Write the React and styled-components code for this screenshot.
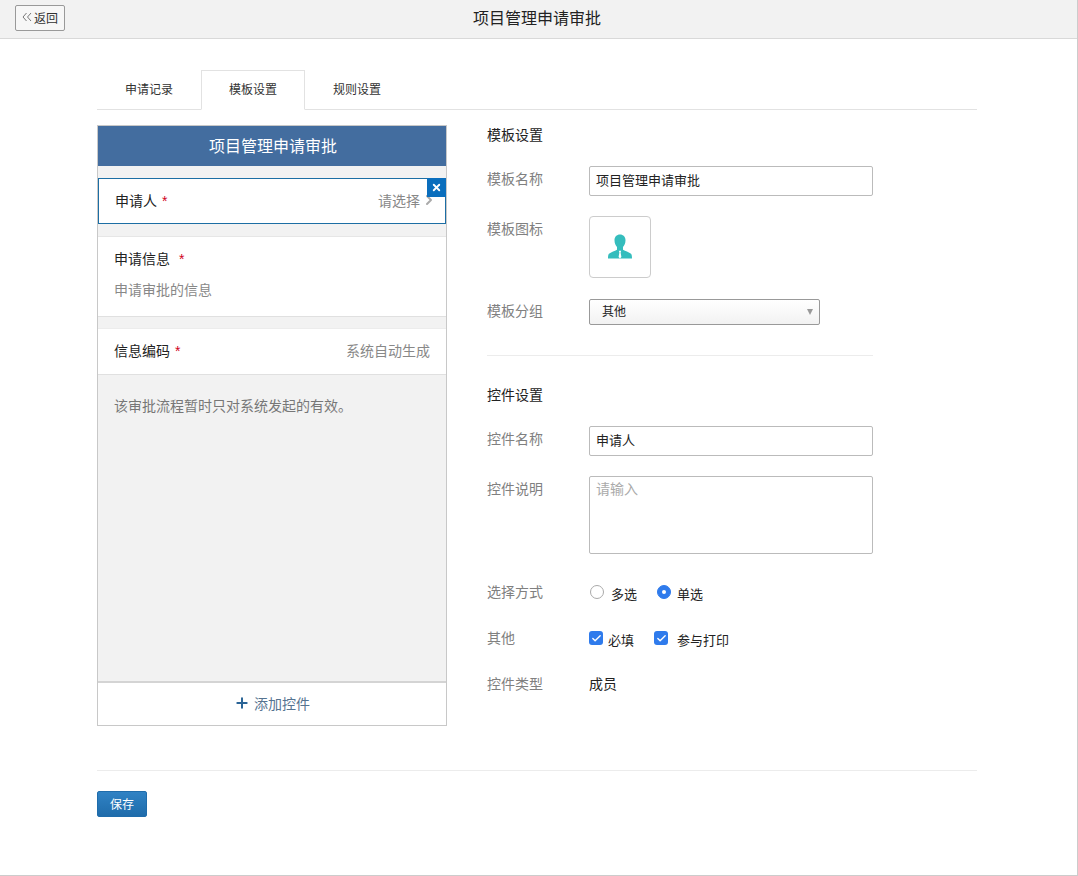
import React from "react";
import styled, { createGlobalStyle } from "styled-components";
import { ChevronRight, Plus, X, Check } from "lucide-react";

const GlobalStyle = createGlobalStyle`
  html, body {
    margin: 0;
    padding: 0;
    background: #fff;
  }
  body {
    font-family: "Liberation Sans", "Noto Sans CJK SC", sans-serif;
    color: #333;
  }
  * {
    box-sizing: border-box;
  }
`;

const Page = styled.div`
  width: 1078px;
  height: 876px;
  border-right: 1px solid #ccc;
  border-bottom: 1px solid #ccc;
  overflow: hidden;
`;

const TopBar = styled.header`
  height: 39px;
  background: #f2f2f2;
  border-bottom: 1px solid #d9d9d9;
  position: relative;
  padding: 5px 15px;
`;

const BackButton = styled.button`
  width: 50px;
  height: 26px;
  display: flex;
  align-items: center;
  gap: 2px;
  padding: 0 0 2px 6px;
  background: #f7f7f7;
  border: 1px solid #999;
  border-radius: 2px;
  font: inherit;
  font-size: 12px;
  color: #333;
`;

const Title = styled.h1`
  position: absolute;
  inset: 0 3px 0 0;
  margin: 0;
  text-align: center;
  font-size: 16px;
  font-weight: 400;
  line-height: 37px;
  color: #222;
  pointer-events: none;
`;

const Main = styled.main`
  width: 880px;
  margin-left: 97px;
  padding-top: 31px;
`;

const Tabs = styled.nav`
  display: flex;
  height: 40px;
  border-bottom: 1px solid #e2e2e2;
`;

const Tab = styled.div`
  width: 104px;
  height: ${({ $active }) => ($active ? "40px" : "39px")};
  text-align: center;
  font-size: 12px;
  line-height: 39px;
  color: #333;
  background: ${({ $active }) => ($active ? "#fff" : "transparent")};
  border: 1px solid ${({ $active }) => ($active ? "#e2e2e2" : "transparent")};
  border-bottom: ${({ $active }) => ($active ? "1px solid #fff" : "none")};
`;

const Columns = styled.div`
  display: flex;
  gap: 40px;
  margin-top: 15px;
`;

const Phone = styled.section`
  width: 350px;
  height: 601px;
  display: flex;
  flex-direction: column;
  background: #f2f2f2;
  border: 1px solid #c8c8c8;
`;

const PhoneHeader = styled.div`
  height: 40px;
  padding-left: 2px;
  background: #436d9f;
  color: #fff;
  font-size: 16px;
  line-height: 42px;
  text-align: center;
  flex: none;
`;

const SelectedRow = styled.div`
  position: relative;
  height: 46px;
  margin-top: 12px;
  padding: 0 8px 2px 16px;
  display: flex;
  align-items: center;
  justify-content: space-between;
  background: #fff;
  border: 1px solid #1c6ea4;
  font-size: 14px;
  color: #222;
  flex: none;
`;

const RemoveBadge = styled.span`
  position: absolute;
  top: -1px;
  right: -1px;
  width: 19px;
  height: 19px;
  display: flex;
  align-items: center;
  justify-content: center;
  background: #0a6ebd;
  color: #fff;
`;

const Required = styled.span`
  color: #d0021b;
  font-size: 14px;
  margin-left: ${({ $gap }) => $gap || 5}px;
`;

const Hint = styled.span`
  display: flex;
  align-items: center;
  gap: 1px;
  color: #888;
  font-size: 14px;
`;

const InfoBlock = styled.div`
  height: 81px;
  margin-top: 12px;
  padding: 11px 16px 0;
  background: #fff;
  border-top: 1px solid #e6e6e6;
  border-bottom: 1px solid #e0e0e0;
  font-size: 14px;
  color: #222;
  flex: none;
`;

const InfoHint = styled.div`
  margin-top: 12px;
  font-size: 14px;
  line-height: 20px;
  color: #888;
`;

const CodeRow = styled.div`
  height: 47px;
  margin-top: 11px;
  padding: 0 16px 4px 16px;
  display: flex;
  align-items: center;
  justify-content: space-between;
  background: #fff;
  border-top: 1px solid #ececec;
  border-bottom: 1px solid #e0e0e0;
  font-size: 14px;
  color: #222;
  flex: none;
`;

const Notice = styled.div`
  flex: 1;
  padding: 21px 16px 0;
  font-size: 14px;
  line-height: 20px;
  color: #777;
`;

const AddControl = styled.div`
  height: 44px;
  flex: none;
  display: flex;
  align-items: center;
  justify-content: center;
  gap: 4px;
  padding-bottom: 2px;
  background: #fff;
  border-top: 2px solid #d4d4d4;
  font-size: 14px;
  color: #557390;
  svg {
    color: #2a6496;
  }
`;

const Form = styled.section`
  width: 386px;
`;

const SectionTitle = styled.h2`
  margin: 0;
  font-size: 14px;
  font-weight: 400;
  line-height: 20px;
  color: #222;
`;

const Row = styled.div`
  display: flex;
  align-items: flex-start;
  margin-top: ${({ $top }) => $top}px;
`;

const Label = styled.label`
  width: 102px;
  flex: none;
  font-size: 14px;
  line-height: 20px;
  padding-top: ${({ $pad }) => $pad ?? 3}px;
  color: #808080;
`;

const TextInput = styled.div`
  width: 284px;
  height: 30px;
  padding: 0 6px;
  font-size: 13px;
  line-height: 28px;
  color: #222;
  background: #fff;
  border: 1px solid #bbb;
  border-radius: 2px;
`;

const TextArea = styled.div`
  width: 284px;
  height: 78px;
  padding: 3px 6px;
  font-size: 14px;
  line-height: 18px;
  color: #aaa;
  background: #fff;
  border: 1px solid #bbb;
  border-radius: 2px;
`;

const IconBox = styled.div`
  width: 62px;
  height: 62px;
  display: flex;
  align-items: center;
  justify-content: center;
  border: 1px solid #ccc;
  border-radius: 4px;
`;

const SelectBox = styled.div`
  position: relative;
  width: 231px;
  height: 26px;
  margin-top: 0;
  padding-left: 12px;
  font-size: 12px;
  line-height: 24px;
  color: #222;
  background: linear-gradient(#fff, #f2f2f2);
  border: 1px solid #999;
  border-radius: 2px;
  &::after {
    content: "";
    position: absolute;
    right: 6px;
    top: 9px;
    border-left: 3px solid transparent;
    border-right: 3px solid transparent;
    border-top: 6px solid #999;
  }
`;

const Divider = styled.hr`
  margin: 30px 0 29px;
  border: 0;
  border-top: 1px solid #ececec;
`;

const OptionGroup = styled.div`
  display: flex;
  align-items: center;
  height: 20px;
  font-size: 13px;
  color: #222;
`;

const OptionText = styled.span`
  padding-top: 2px;
`;

const Radio = styled.span`
  width: 14px;
  height: 14px;
  flex: none;
  border-radius: 50%;
  display: flex;
  align-items: center;
  justify-content: center;
  margin: ${({ $first }) => ($first ? "0 7px 0 1px" : "0 6px 0 20px")};
  background: ${({ $on }) => ($on ? "#2f7bec" : "#fff")};
  border: 1px solid ${({ $on }) => ($on ? "#2f7bec" : "#aaa")};
  &::after {
    content: "";
    display: ${({ $on }) => ($on ? "block" : "none")};
    width: 4px;
    height: 4px;
    border-radius: 50%;
    background: #fff;
  }
`;

const CheckBox = styled.span`
  width: 14px;
  height: 14px;
  flex: none;
  display: flex;
  align-items: center;
  justify-content: center;
  border-radius: 3px;
  background: #2f7bec;
  color: #fff;
  margin: ${({ $first }) => ($first ? "0 5px 0 0" : "0 9px 0 20px")};
`;

const PlainValue = styled.span`
  font-size: 14px;
  line-height: 20px;
  color: #222;
`;

const Footer = styled.footer`
  margin-top: 44px;
  padding-top: 20px;
  border-top: 1px solid #ececec;
`;

const SaveButton = styled.button`
  display: block;
  width: 50px;
  height: 26px;
  padding: 0 0 2px;
  font: inherit;
  font-size: 12px;
  color: #fff;
  background: linear-gradient(#3082c4, #1f6cab);
  border: 1px solid #1f6cab;
  border-radius: 2px;
`;

const PersonIcon = () => (
  <svg width="26" height="26" viewBox="0 0 26 26">
    <path
      fill="#35bdbd"
      d="M13 .5c3.300 0 5.500 2.300 5.500 5.800 0 3-1.200 5.400-2.500 6.800v2.700c2.500 1.400 5.500 2.300 7.600 3.700.9.600 1.400 1.500 1.400 5H1c0-3.500.5-4.400 1.400-5 2.100-1.400 5.100-2.300 7.600-3.700v-2.700C8.700 11.700 7.500 9.300 7.500 6.300 7.500 2.800 9.700.5 13 .5z"
    />
    <path fill="#fff" d="M11.800 16.800h2.400l-.6 1.700.8 4.500-1.400 1.500-1.400-1.500.8-4.500z" />
  </svg>
);

const BackIcon = () => (
  <svg width="10" height="10" viewBox="0 0 10 10" fill="none" stroke="#777" strokeWidth="1">
    <path d="M4.500 1 1 5l3.500 4M9 1 5.500 5 9 9" />
  </svg>
);

const App = () => {
  return (
    <Page>
      <GlobalStyle />
      <TopBar>
        <BackButton>
          <BackIcon />
          返回
        </BackButton>
        <Title>项目管理申请审批</Title>
      </TopBar>
      <Main>
        <Tabs>
          <Tab>申请记录</Tab>
          <Tab $active>模板设置</Tab>
          <Tab>规则设置</Tab>
        </Tabs>
        <Columns>
          <Phone>
            <PhoneHeader>项目管理申请审批</PhoneHeader>
            <SelectedRow>
              <span>
                申请人<Required>*</Required>
              </span>
              <Hint>
                请选择
                <ChevronRight size={16} color="#aaa" strokeWidth={3} />
              </Hint>
              <RemoveBadge>
                <X size={11} strokeWidth={4} />
              </RemoveBadge>
            </SelectedRow>
            <InfoBlock>
              <span>
                申请信息<Required $gap={9}>*</Required>
              </span>
              <InfoHint>申请审批的信息</InfoHint>
            </InfoBlock>
            <CodeRow>
              <span>
                信息编码<Required>*</Required>
              </span>
              <Hint>系统自动生成</Hint>
            </CodeRow>
            <Notice>该审批流程暂时只对系统发起的有效。</Notice>
            <AddControl>
              <Plus size={16} strokeWidth={3} />
              添加控件
            </AddControl>
          </Phone>
          <Form>
            <SectionTitle>模板设置</SectionTitle>
            <Row $top={21}>
              <Label>模板名称</Label>
              <TextInput>项目管理申请审批</TextInput>
            </Row>
            <Row $top={20}>
              <Label>模板图标</Label>
              <IconBox>
                <PersonIcon />
              </IconBox>
            </Row>
            <Row $top={21}>
              <Label $pad={2}>模板分组</Label>
              <SelectBox>其他</SelectBox>
            </Row>
            <Divider />
            <SectionTitle>控件设置</SectionTitle>
            <Row $top={21}>
              <Label>控件名称</Label>
              <TextInput>申请人</TextInput>
            </Row>
            <Row $top={20}>
              <Label>控件说明</Label>
              <TextArea>请输入</TextArea>
            </Row>
            <Row $top={28}>
              <Label $pad={0}>选择方式</Label>
              <OptionGroup>
                <Radio $first />
                <OptionText>多选</OptionText>
                <Radio $on />
                <OptionText>单选</OptionText>
              </OptionGroup>
            </Row>
            <Row $top={26}>
              <Label $pad={0}>其他</Label>
              <OptionGroup>
                <CheckBox $first>
                  <Check size={11} strokeWidth={3} />
                </CheckBox>
                <OptionText>必填</OptionText>
                <CheckBox>
                  <Check size={11} strokeWidth={3} />
                </CheckBox>
                <OptionText>参与打印</OptionText>
              </OptionGroup>
            </Row>
            <Row $top={26}>
              <Label $pad={0}>控件类型</Label>
              <PlainValue>成员</PlainValue>
            </Row>
          </Form>
        </Columns>
        <Footer>
          <SaveButton>保存</SaveButton>
        </Footer>
      </Main>
    </Page>
  );
};

export default App;
